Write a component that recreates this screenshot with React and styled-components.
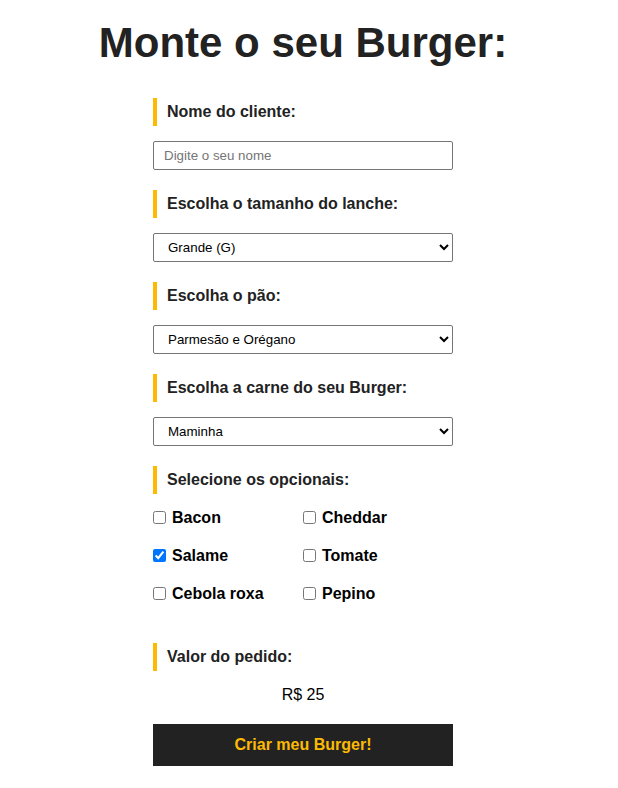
import React, { useState } from "react";
import styled, { createGlobalStyle } from "styled-components";

const GlobalStyle = createGlobalStyle`
  body {
    margin: 0;
    background: #fff;
    font-family: "Liberation Sans", Arial, Helvetica, sans-serif;
  }
`;

const Page = styled.main`
  width: 606px;
  padding-top: 19px;
  display: flex;
  flex-direction: column;
  align-items: center;
`;

const Title = styled.h1`
  margin: 0 0 31px;
  font-size: 42px;
  font-weight: bold;
  color: #222;
`;

const Form = styled.form`
  width: 300px;
  display: flex;
  flex-direction: column;
`;

const InputContainer = styled.div`
  display: flex;
  flex-direction: ${(p) => (p.$row ? "row" : "column")};
  flex-wrap: ${(p) => (p.$row ? "wrap" : "nowrap")};
  margin-bottom: 20px;
`;

const Label = styled.label`
  width: 100%;
  box-sizing: border-box;
  font-weight: bold;
  font-size: 16px;
  line-height: 18px;
  margin-bottom: 15px;
  color: #222;
  padding: 5px 10px;
  border-left: 4px solid #fcba03;
`;

const TextInput = styled.input`
  box-sizing: border-box;
  width: 300px;
  height: 29px;
  padding: 5px 10px;
  border: 1px solid #767676;
  border-radius: 2px;
  font-family: "Liberation Sans", Arial, sans-serif;
  font-size: 13.33px;
  color: #000;

  &::placeholder {
    color: #757575;
  }
`;

const Select = styled.select`
  box-sizing: border-box;
  width: 300px;
  height: 29px;
  padding: 5px 10px;
  border: 1px solid #767676;
  border-radius: 2px;
  background: #fff;
  font-family: "Liberation Sans", Arial, sans-serif;
  font-size: 13.33px;
  color: #000;
`;

const CheckboxItem = styled.label`
  display: flex;
  align-items: flex-start;
  width: 50%;
  margin-bottom: 20px;
  line-height: 18px;
`;

const Checkbox = styled.input`
  width: 13px;
  height: 13px;
  margin: 2px 0 0 0;
`;

const CheckboxText = styled.span`
  margin-left: 6px;
  font-weight: bold;
  font-size: 16px;
  color: #000;
`;

const Price = styled.p`
  margin: 0 0 20px;
  text-align: center;
  font-size: 16px;
  line-height: 18px;
  color: #000;
`;

const SubmitButton = styled.button`
  width: 300px;
  height: 42px;
  border: none;
  background: #222;
  color: #fcba03;
  font-family: "Liberation Sans", Arial, sans-serif;
  font-weight: bold;
  font-size: 16px;
  cursor: pointer;
`;

const opcionais = ["Bacon", "Cheddar", "Salame", "Tomate", "Cebola roxa", "Pepino"];

export default function App() {
  const [checked, setChecked] = useState(["Salame"]);

  const toggle = (name) =>
    setChecked((c) => (c.includes(name) ? c.filter((x) => x !== name) : [...c, name]));

  return (
    <Page>
      <GlobalStyle />
      <Title>Monte o seu Burger:</Title>
      <Form onSubmit={(e) => e.preventDefault()}>
        <InputContainer>
          <Label htmlFor="nome">Nome do cliente:</Label>
          <TextInput id="nome" type="text" placeholder="Digite o seu nome" />
        </InputContainer>
        <InputContainer>
          <Label htmlFor="tamanho">Escolha o tamanho do lanche:</Label>
          <Select id="tamanho" defaultValue="G">
            <option value="P">Pequeno (P)</option>
            <option value="M">Médio (M)</option>
            <option value="G">Grande (G)</option>
          </Select>
        </InputContainer>
        <InputContainer>
          <Label htmlFor="pao">Escolha o pão:</Label>
          <Select id="pao" defaultValue="parmesao">
            <option value="italiano">Italiano Branco</option>
            <option value="3queijos">3 Queijos</option>
            <option value="parmesao">Parmesão e Orégano</option>
            <option value="integral">Integral</option>
          </Select>
        </InputContainer>
        <InputContainer>
          <Label htmlFor="carne">Escolha a carne do seu Burger:</Label>
          <Select id="carne" defaultValue="maminha">
            <option value="maminha">Maminha</option>
            <option value="alcatra">Alcatra</option>
            <option value="picanha">Picanha</option>
            <option value="veggie">Veggie burger</option>
          </Select>
        </InputContainer>
        <InputContainer $row>
          <Label as="div">Selecione os opcionais:</Label>
          {opcionais.map((name) => (
            <CheckboxItem key={name}>
              <Checkbox
                type="checkbox"
                checked={checked.includes(name)}
                onChange={() => toggle(name)}
              />
              <CheckboxText>{name}</CheckboxText>
            </CheckboxItem>
          ))}
        </InputContainer>
        <Label as="div">Valor do pedido:</Label>
        <Price>R$ 25</Price>
        <SubmitButton type="submit">Criar meu Burger!</SubmitButton>
      </Form>
    </Page>
  );
}
